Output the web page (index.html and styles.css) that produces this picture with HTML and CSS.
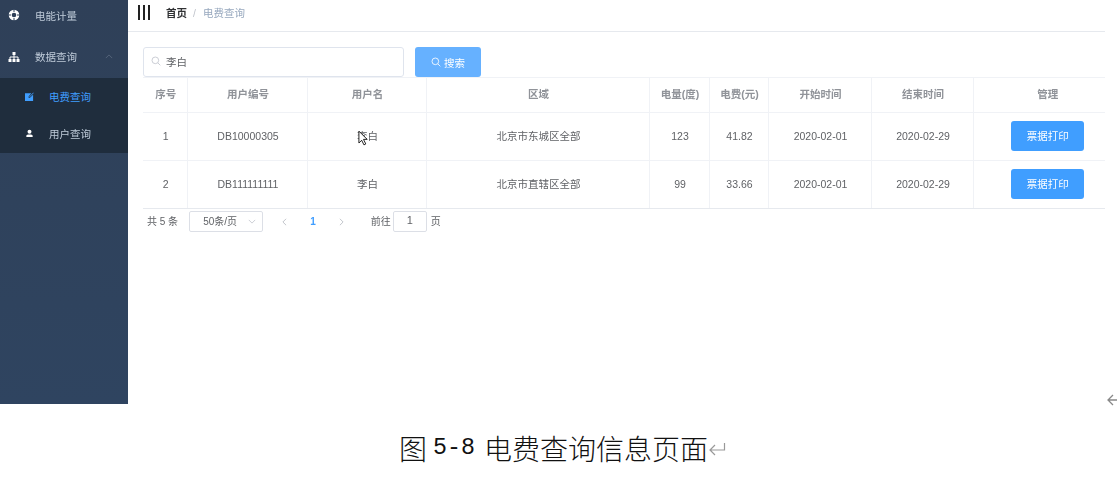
FILE: index.html
```html
<!DOCTYPE html>
<html lang="zh-CN">
<head>
    <meta charset="utf-8">
    <title>电费查询</title>
    <link rel="stylesheet" href="styles.css">
</head>
<body>
<div class="shot">
    <aside class="sidebar">
        <div class="menu-item first">
            <svg class="menu-icon" viewBox="0 0 12 12"><circle cx="6" cy="6" r="3.800" fill="none" stroke="#fff" stroke-width="3"/><path d="M6 0v3M6 9v3M0 6h3M9 6h3" stroke="#2f4159" stroke-width="1"/></svg>
            <span>电能计量</span>
        </div>
        <div class="menu-item">
            <svg class="menu-icon" viewBox="0 0 12 12"><path fill="#fff" d="M4.500 1h3v3h-3zM0.500 8h3v3h-3zM4.500 8h3v3h-3zM8.500 8h3v3h-3z"/><path d="M6 4v4M2 8V6h8v2" fill="none" stroke="#fff"/></svg>
            <span>数据查询</span>
            <svg class="chevron" viewBox="0 0 10 6"><path d="M1 5l4-4 4 4" fill="none" stroke="#5d6c80" stroke-width="1"/></svg>
        </div>
        <div class="submenu">
            <div class="sub-item active">
                <svg class="sub-icon" viewBox="0 0 10 10"><path fill="#409eff" d="M0 1.500h7L4 5v1.500h1.500L9 3v7H0z"/><path d="M5 5.500L9.500 .8" stroke="#409eff"/></svg>
                <span>电费查询</span>
            </div>
            <div class="sub-item">
                <svg class="sub-icon" viewBox="0 0 10 10"><circle cx="5" cy="3" r="2.200" fill="#fff"/><path fill="#fff" d="M1.500 9V7.500C1.500 6.400 3 6 5 6s3.500.4 3.500 1.500V9z"/></svg>
                <span>用户查询</span>
            </div>
        </div>
    </aside>
    <main class="main">
        <header class="topbar">
            <div class="hamburger"><i></i><i></i><i></i></div>
            <span class="crumb-home">首页</span>
            <span class="crumb-sep">/</span>
            <span class="crumb-current">电费查询</span>
        </header>
        <div class="content">
            <div class="search-row">
                <div class="search-input">
                    <svg class="search-icon" viewBox="0 0 12 12"><circle cx="5.200" cy="5.200" r="4" fill="none" stroke="#c0c4cc"/><path d="M8.200 8.200l3 3" stroke="#c0c4cc"/></svg>
                    <span>李白</span>
                </div>
                <button class="search-btn">
                    <svg class="search-icon" viewBox="0 0 12 12"><circle cx="5.200" cy="5.200" r="4" fill="none" stroke="#fff"/><path d="M8.200 8.200l3 3" stroke="#fff"/></svg>
                    搜索
                </button>
            </div>
            <table class="data-table">
                <colgroup>
                    <col class="c-no"><col class="c-code"><col class="c-name"><col class="c-area"><col class="c-kwh"><col class="c-fee"><col class="c-start"><col class="c-end"><col class="c-manage">
                </colgroup>
                <thead>
                    <tr>
                        <th>序号</th><th>用户编号</th><th>用户名</th><th>区域</th><th>电量(度)</th><th>电费(元)</th><th>开始时间</th><th>结束时间</th><th>管理</th>
                    </tr>
                </thead>
                <tbody>
                    <tr>
                        <td>1</td><td>DB10000305</td>
                        <td class="name-cell">李白
                            <svg class="cursor" viewBox="0 0 12 17"><path d="M1 1v13l3-3 2.500 5 2-1-2.500-5h4z" fill="#fff" stroke="#111" stroke-width="1"/></svg>
                        </td>
                        <td>北京市东城区全部</td><td>123</td><td>41.82</td><td>2020-02-01</td><td>2020-02-29</td>
                        <td><button class="print-btn">票据打印</button></td>
                    </tr>
                    <tr>
                        <td>2</td><td>DB111111111</td><td>李白</td>
                        <td>北京市直辖区全部</td><td>99</td><td>33.66</td><td>2020-02-01</td><td>2020-02-29</td>
                        <td><button class="print-btn">票据打印</button></td>
                    </tr>
                </tbody>
            </table>
            <div class="pager">
                <span class="pager-total">共 5 条</span>
                <div class="pager-size">
                    <span>50条/页</span>
                    <svg class="pager-arrow" viewBox="0 0 10 6"><path d="M1 1l4 4 4-4" fill="none" stroke="#c0c4cc"/></svg>
                </div>
                <svg class="pager-prev" viewBox="0 0 6 10"><path d="M5 1L1 5l4 4" fill="none" stroke="#b4b8bf"/></svg>
                <span class="pager-num">1</span>
                <svg class="pager-next" viewBox="0 0 6 10"><path d="M1 1l4 4-4 4" fill="none" stroke="#b4b8bf"/></svg>
                <span class="pager-goto">前往</span>
                <div class="pager-input">1</div>
                <span>页</span>
            </div>
        </div>
    </main>
</div>
<div class="caption">
    <span>图</span><span class="caption-num">5-8</span><span>电费查询信息页面</span>
    <svg class="return-mark" viewBox="0 0 18 14"><path d="M16.500 1v7H2M7 3L2 8l5 5" fill="none" stroke="#999" stroke-width="1.200"/></svg>
</div>
<svg class="side-arrow" viewBox="0 0 10 12"><path d="M6 1L1 6l5 5M1 6h9" fill="none" stroke="#888" stroke-width="1.300"/></svg>
</body>
</html>
```

FILE: styles.css
```css
html, body {
    margin: 0;
    height: 477px;
    overflow: hidden;
    background: #fff;
    font-family: "Liberation Sans", "Noto Sans CJK SC", sans-serif;
    position: relative;
}

.shot {
    display: flex;
    height: 404px;
    width: 1105px;
    font-size: 10.5px;
    color: #606266;
    filter: blur(0.6px);
}

.sidebar {
    width: 128px;
    flex-shrink: 0;
    background: linear-gradient(#2f4058, #2f4460);
    color: #bfcbd9;
}

.menu-item {
    display: flex;
    align-items: center;
    box-sizing: border-box;
    height: 41px;
    padding: 0 0 2px 8px;
    position: relative;
}

.menu-item.first {
    height: 32px;
    margin-bottom: 5px;
}

.menu-icon {
    width: 12px;
    height: 12px;
    margin-right: 15px;
}

.chevron {
    position: absolute;
    left: 105px;
    top: 17px;
    width: 8px;
    height: 5px;
}

.submenu {
    background: #1f2d3d;
    height: 75px;
}

.sub-item {
    display: flex;
    align-items: center;
    height: 37px;
    padding-left: 25px;
}

.sub-item.active {
    color: #409eff;
}

.sub-icon {
    width: 9px;
    height: 9px;
    margin-right: 15px;
}

.main {
    flex: 1;
    min-width: 0;
    overflow: hidden;
}

.topbar {
    display: flex;
    align-items: center;
    height: 25px;
    padding-bottom: 6px;
    border-bottom: 1px solid #e6e9ee;
    color: #97a8be;
}

.hamburger {
    display: flex;
    gap: 3px;
    margin: 0 16px 0 10px;
}

.hamburger i {
    display: block;
    width: 2px;
    height: 15px;
    background: #222;
}

.crumb-home {
    color: #303133;
    font-weight: bold;
}

.crumb-sep {
    margin: 0 7px 0 6px;
    color: #c0c4cc;
}

.content {
    padding: 15px 0 0 15px;
}

.search-row {
    display: flex;
    gap: 11px;
}

.search-input {
    display: flex;
    align-items: center;
    box-sizing: border-box;
    width: 261px;
    height: 30px;
    padding: 0 0 2px 7px;
    border: 1px solid #dfe4ed;
    border-radius: 3px;
}

.search-icon {
    width: 10px;
    height: 10px;
    margin-right: 5px;
}

.search-btn {
    display: flex;
    align-items: center;
    justify-content: center;
    width: 66px;
    height: 30px;
    padding: 0;
    border: none;
    border-radius: 3px;
    background: #66b1ff;
    color: #fff;
    font: inherit;
}

.search-btn .search-icon {
    margin-right: 3px;
}

/* last column runs past the edge of the capture and gets cut off */
.data-table {
    width: 979px;
    table-layout: fixed;
    border-collapse: collapse;
    text-align: center;
}

.c-no { width: 44px; }
.c-code { width: 120px; }
.c-name { width: 119px; }
.c-area { width: 223px; }
.c-kwh { width: 60px; }
.c-fee { width: 59px; }
.c-start { width: 103px; }
.c-end { width: 102px; }
.c-manage { width: 149px; }

.data-table th, .data-table td {
    box-sizing: border-box;
    padding: 0 0 2px 2px;
    border: 1px solid #f0f2f6;
}

.data-table th {
    height: 35px;
    padding-bottom: 4px;
    color: #909399;
}

.data-table td {
    height: 48px;
}

.data-table tr:last-child td {
    border-bottom-color: #e6e9ee;
}

.data-table tr > :first-child { border-left: none; }

.data-table tr > :last-child {
    border-right: none;
    padding-left: 0;
}

.name-cell {
    position: relative;
}

.cursor {
    position: absolute;
    left: 50px;
    top: 17px;
    width: 11px;
    height: 16px;
}

.print-btn {
    display: block;
    width: 73px;
    height: 30px;
    padding: 0;
    margin: 0 auto;
    border: none;
    border-radius: 3px;
    background: #409eff;
    color: #fff;
    font: inherit;
}

.pager {
    display: flex;
    align-items: center;
    height: 25px;
    padding-left: 4px;
    font-size: 10px;
}

.pager span {
    margin-bottom: 2px;
}

.pager .pager-num {
    margin-bottom: 0;
}

.pager-size {
    display: flex;
    align-items: center;
    justify-content: space-between;
    box-sizing: border-box;
    width: 74px;
    height: 21px;
    margin-left: 11px;
    padding: 0 6px 0 13px;
    border: 1px solid #dcdfe6;
    border-radius: 2px;
}

.pager-arrow {
    width: 8px;
    height: 5px;
}

.pager-prev, .pager-next {
    width: 5px;
    height: 8px;
}

.pager-prev {
    margin-left: 19px;
}

.pager-num {
    margin: 0 23px;
    color: #409eff;
    font-weight: bold;
}

.pager-goto {
    margin-left: 27px;
}

.pager-input {
    box-sizing: border-box;
    width: 34px;
    height: 21px;
    margin: 0 4px 0 2px;
    border: 1px solid #dcdfe6;
    border-radius: 2px;
    line-height: 16px;
    text-align: center;
    font-size: 11px;
}

.caption {
    display: flex;
    align-items: center;
    height: 40px;
    margin-top: 24px;
    padding-left: 399px;
    font-family: "Liberation Serif", "Noto Sans CJK SC", serif;
    font-weight: 300;
    font-size: 28px;
    color: #111;
}

.caption-num {
    margin: 0 9px 0 6px;
    font-family: "Liberation Mono", monospace;
    font-size: 23.300px;
}

.return-mark {
    width: 18px;
    height: 14px;
    margin-top: 1px;
}

.side-arrow {
    position: absolute;
    left: 1107px;
    top: 394px;
    width: 10px;
    height: 12px;
}
```
